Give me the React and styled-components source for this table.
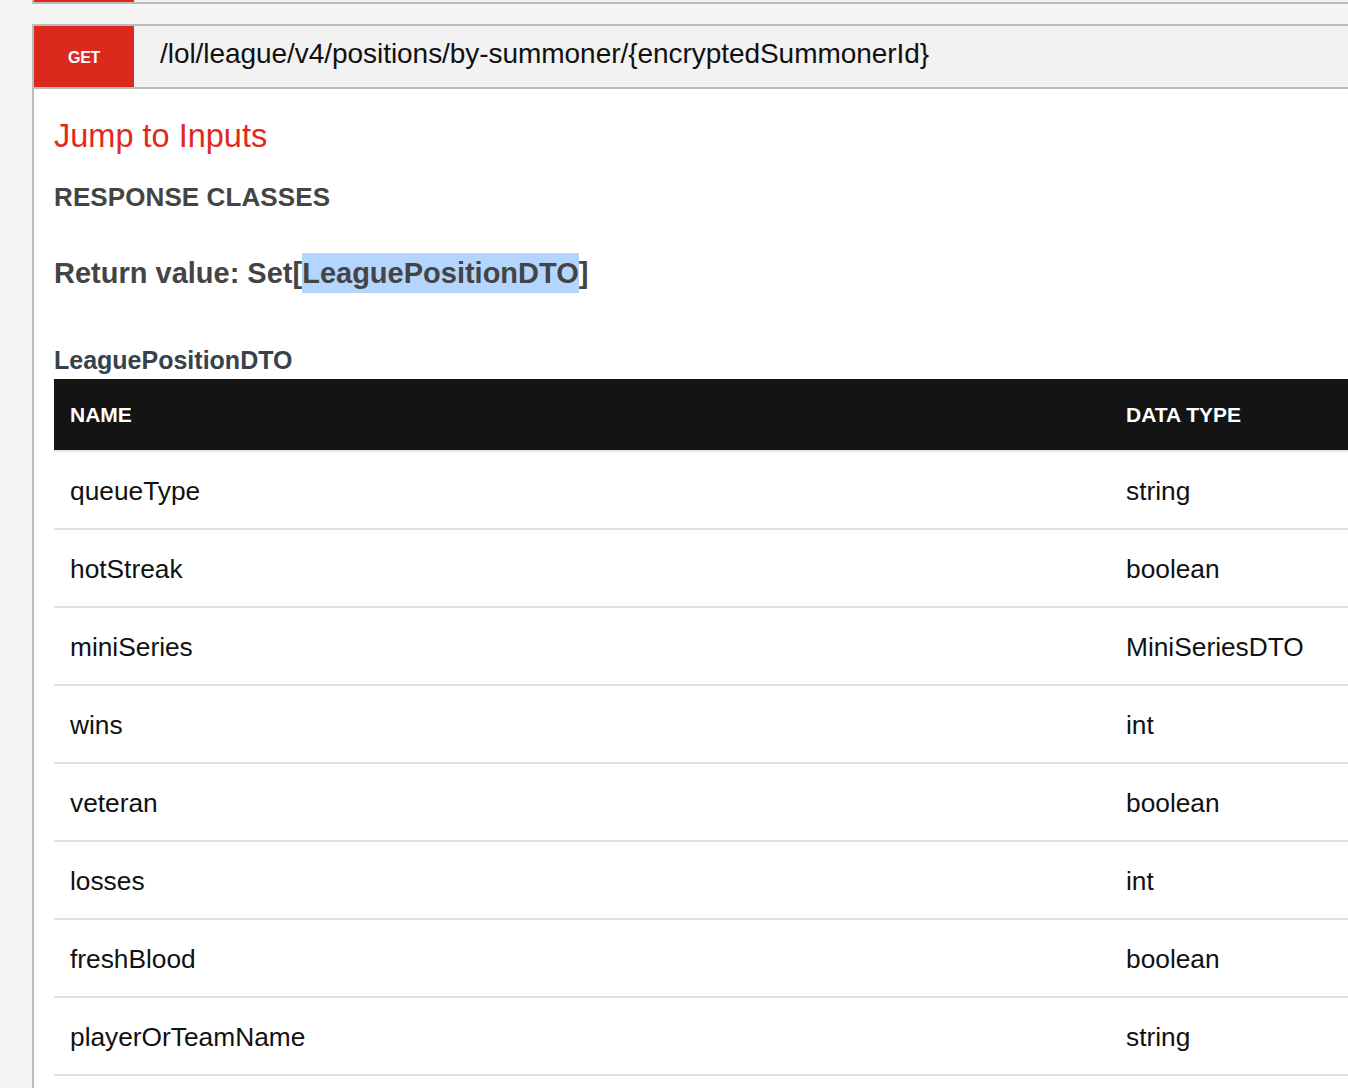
import styled, { createGlobalStyle } from 'styled-components'

const GlobalStyle = createGlobalStyle`
  html, body {
    margin: 0;
    padding: 0;
    background: #f5f5f5;
    overflow: hidden;
  }
  body {
    font-family: "Liberation Sans", Arial, sans-serif;
    color: #111;
  }
`

const Page = styled.div`
  padding-left: 32px;
  width: 1400px;
`

const Operation = styled.section`
  border-left: 2px solid #bbb;
  border-top: ${({ tail }) => (tail ? 'none' : '2px solid #bbb')};
  margin-bottom: 20px;
  background: #fff;
`

const Heading = styled.div`
  display: flex;
  align-items: stretch;
  height: ${({ tail }) => (tail ? '2px' : '61px')};
  overflow: hidden;
  background: #f2f2f2;
  border-bottom: 2px solid #bbb;
`

const Method = styled.span`
  flex: 0 0 100px;
  display: flex;
  align-items: center;
  justify-content: center;
  background: #dc291e;
  color: #fff;
  font-weight: bold;
  font-size: 16px;
  letter-spacing: -0.3px;
  padding-top: 2px;
  box-sizing: border-box;
`

const Path = styled.span`
  display: flex;
  align-items: center;
  padding: 0 0 5px 26px;
  font-size: 28px;
  letter-spacing: -0.05px;
  color: #111;
`

const Body = styled.div`
  padding: 29px 0 120px 20px;
`

const JumpLink = styled.a`
  display: block;
  font-size: 32.5px;
  line-height: 36px;
  color: #e02a20;
  text-decoration: none;
  cursor: pointer;
`

const SectionTitle = styled.h3`
  margin: 28px 0 0;
  font-size: 26px;
  line-height: 30px;
  font-weight: bold;
  color: #444;
  letter-spacing: 0.1px;
`

const ReturnValue = styled.h4`
  margin: 44px 0 0;
  font-size: 29px;
  line-height: 34px;
  font-weight: bold;
  color: #444;
`

const Selected = styled.span`
  background: #b4d5fe;
  padding: 4px 0;
`

const ModelName = styled.h5`
  margin: 56px 0 5px;
  font-size: 25px;
  line-height: 28px;
  font-weight: bold;
  color: #36434d;
`

const Table = styled.table`
  width: 100%;
  border-collapse: collapse;
  background: #fff;
`

const HeadCell = styled.th`
  height: 72px;
  padding: 0 16px;
  background: #141414;
  color: #fff;
  font-size: 21px;
  font-weight: bold;
  text-align: left;
  vertical-align: middle;
  border-bottom: 2px solid #e3e6ea;
  width: ${({ w }) => w || 'auto'};
  box-sizing: border-box;
`

const Cell = styled.td`
  height: 74px;
  padding: 2px 16px 0;
  font-size: 26.3px;
  color: #111;
  vertical-align: middle;
  border-bottom: 2px solid #e1e1e1;
`

const fields = [
  ['queueType', 'string'],
  ['hotStreak', 'boolean'],
  ['miniSeries', 'MiniSeriesDTO'],
  ['wins', 'int'],
  ['veteran', 'boolean'],
  ['losses', 'int'],
  ['freshBlood', 'boolean'],
  ['playerOrTeamName', 'string'],
]

const App = () => {
  return (
    <>
      <GlobalStyle />
      <Page>
        <Operation tail>
          <Heading tail>
            <Method />
          </Heading>
        </Operation>

        <Operation>
          <Heading>
            <Method>GET</Method>
            <Path>/lol/league/v4/positions/by-summoner/{'{encryptedSummonerId}'}</Path>
          </Heading>
          <Body>
            <JumpLink>Jump to Inputs</JumpLink>
            <SectionTitle>RESPONSE CLASSES</SectionTitle>
            <ReturnValue>
              Return value: Set[<Selected>LeaguePositionDTO</Selected>]
            </ReturnValue>
            <ModelName>LeaguePositionDTO</ModelName>
            <Table>
              <thead>
                <tr>
                  <HeadCell w="1056px">NAME</HeadCell>
                  <HeadCell>DATA TYPE</HeadCell>
                </tr>
              </thead>
              <tbody>
                {fields.map(([name, type]) => (
                  <tr key={name}>
                    <Cell>{name}</Cell>
                    <Cell>{type}</Cell>
                  </tr>
                ))}
              </tbody>
            </Table>
          </Body>
        </Operation>
      </Page>
    </>
  )
}

export default App
